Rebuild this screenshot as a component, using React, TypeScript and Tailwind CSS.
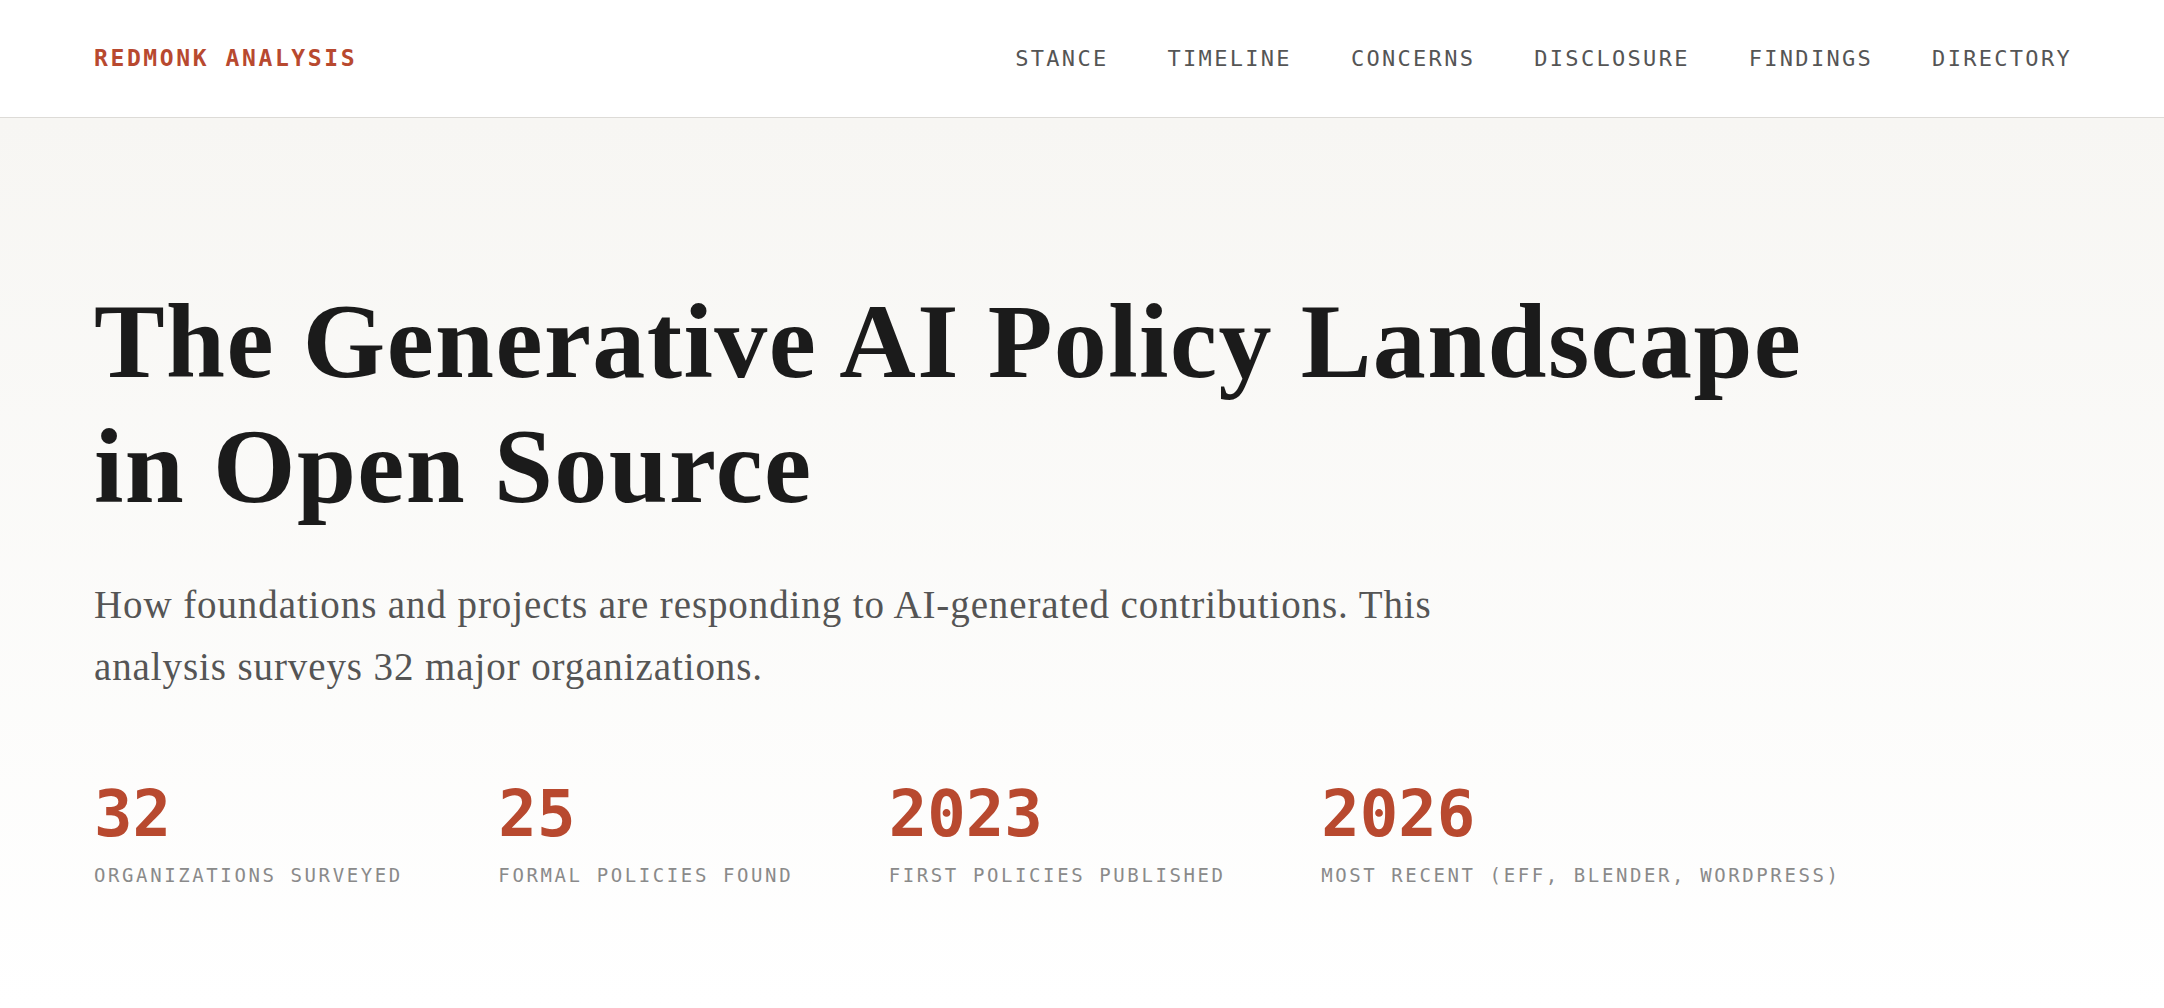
const navItems = ["Stance", "Timeline", "Concerns", "Disclosure", "Findings", "Directory"];

const stats = [
  { value: "32", label: "Organizations surveyed" },
  { value: "25", label: "Formal policies found" },
  { value: "2023", label: "First policies published" },
  { value: "2026", label: "Most recent (EFF, Blender, WordPress)" },
];

const mono = "font-['DejaVu_Sans_Mono',monospace]";

export default function App() {
  return (
    <div className="min-h-screen bg-white text-[#1b1b1b]">
      <header className="h-[118px] border-b border-[#dddbd7] bg-white px-[94px] flex items-center justify-between">
        <a className={`${mono} text-[23px] font-bold tracking-[2.6px] text-[#b8492f] uppercase`}>
          Redmonk Analysis
        </a>
        <nav className="flex items-center gap-[59px] mr-[-2px]">
          {navItems.map((item) => (
            <a key={item} className={`${mono} text-[22px] tracking-[2.3px] text-[#555] uppercase`}>
              {item}
            </a>
          ))}
        </nav>
      </header>

      <section className="min-h-[890px] bg-gradient-to-b from-[#f7f6f3] to-white px-[94px] pt-[161px] pb-16">
        <h1 className="font-['Liberation_Serif',serif] font-bold text-[106px] leading-[125px] tracking-[1.4px] text-[#1b1b1b]">
          The Generative AI Policy Landscape
          <br />
          in Open Source
        </h1>
        <p className="mt-[45px] font-['Liberation_Serif',serif] text-[39px] leading-[62px] tracking-[0.9px] text-[#555] max-w-[1400px]">
          How foundations and projects are responding to AI-generated contributions. This analysis surveys 32 major organizations.
        </p>

        <div className="mt-[84px] flex gap-[95.5px]">
          {stats.map((s) => (
            <div key={s.value} className="flex flex-col">
              <span className={`${mono} font-bold text-[64px] leading-[64px] text-[#b8492f]`}>{s.value}</span>
              <span className={`${mono} mt-[15px] text-[19px] leading-[28px] tracking-[2.6px] uppercase text-[#8a8a8a]`}>
                {s.label}
              </span>
            </div>
          ))}
        </div>
      </section>
    </div>
  );
}
